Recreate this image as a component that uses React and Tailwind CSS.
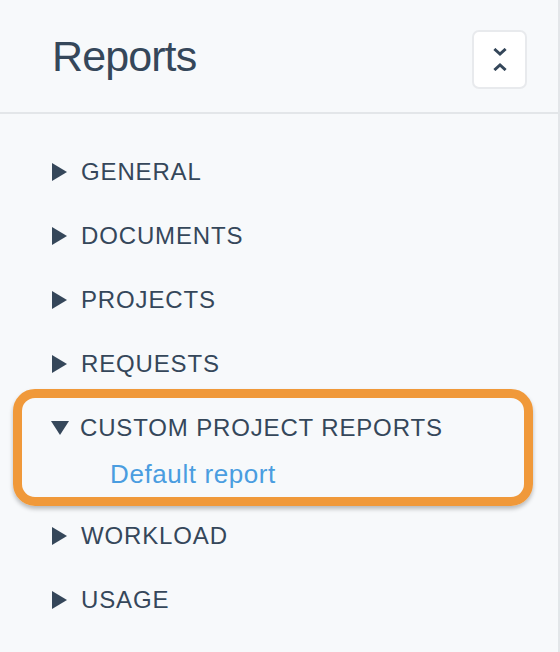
const sections = [
    { key: 'general', label: 'GENERAL' },
    { key: 'documents', label: 'DOCUMENTS' },
    { key: 'projects', label: 'PROJECTS' },
    { key: 'requests', label: 'REQUESTS' },
];

const tailSections = [
    { key: 'workload', label: 'WORKLOAD' },
    { key: 'usage', label: 'USAGE' },
];

// Solid caret, pointing right when closed and down when open
const Caret = ({ open }) => (
    open ? (
        <svg width="18" height="14" viewBox="0 0 18 14" className="shrink-0 -ml-[1px] mr-[-3px]">
            <path d="M0 0 H18 L9 14 Z" fill="#35475a" />
        </svg>
    ) : (
        <svg width="15" height="18" viewBox="0 0 15 18" className="shrink-0">
            <path d="M0 0 L15 9 L0 18 Z" fill="#35475a" />
        </svg>
    )
);

// Collapse-all toggle: chevron down above chevron up
const CollapseIcon = () => (
    <svg width="14" height="23" viewBox="0 0 14 23" fill="none" stroke="#35475a" strokeWidth="3" strokeLinecap="square" strokeLinejoin="miter">
        <path d="M2.5 2 L7 6 L11.5 2" />
        <path d="M2.5 21 L7 17 L11.5 21" />
    </svg>
);

const SectionRow = ({ label, open }) => (
    <div className="h-[64px] flex items-center pl-[52px] gap-[14px] cursor-pointer">
        <Caret open={open} />
        <span className="text-[24px] tracking-[0.85px] text-[#35475a]">{label}</span>
    </div>
);

const App = () => {
    return (
        <div className="w-[560px] h-[652px] bg-[#f7f9fb] border-r-2 border-[#e3e6e9] overflow-hidden font-['Liberation_Sans',Arial,sans-serif]">
            <header className="h-[114px] flex items-center justify-between border-b-2 border-[#e3e6e9] pl-[52px] pr-[31px]">
                <h1 className="text-[43px] tracking-[-0.9px] text-[#35475a] leading-none">Reports</h1>
                <button className="w-[55px] h-[59px] mt-[6px] bg-white border-2 border-[#e8eaed] rounded-[7px] flex items-center justify-center">
                    <CollapseIcon />
                </button>
            </header>

            <nav className="pt-[26px]">
                {sections.map(section => (
                    <SectionRow key={section.key} label={section.label} />
                ))}

                <div className="relative pb-[16px]">
                    <div className="absolute left-[13px] right-[25px] -top-[7px] -bottom-[2px] border-[9px] border-[#f0993a] rounded-[22px] shadow-[0_3px_4px_rgba(0,0,0,0.25)] pointer-events-none" />
                    <SectionRow label="CUSTOM PROJECT REPORTS" open />
                    <div className="h-[28px] flex items-center pl-[110px]">
                        <a href="#" className="text-[26px] tracking-[0.6px] text-[#4a9de0]">Default report</a>
                    </div>
                </div>

                {tailSections.map(section => (
                    <SectionRow key={section.key} label={section.label} />
                ))}
            </nav>
        </div>
    );
};

export default App;
